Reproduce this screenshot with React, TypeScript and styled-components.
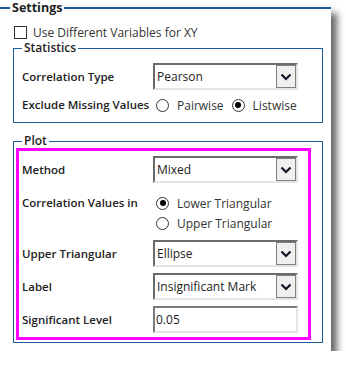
import React from 'react';
import styled, { createGlobalStyle } from 'styled-components';

const GlobalStyle = createGlobalStyle`
  body {
    margin: 0;
    background: #fff;
    font-family: 'Open Sans', 'Noto Sans', sans-serif;
    font-size: 12px;
    color: #1e1e1e;
  }
`;

const BLUE = '#1b5b98';

const SettingsPanel = styled.fieldset`
  box-sizing: border-box;
  width: 331px;
  height: 351px;
  margin: 0;
  padding: 0;
  border: none;
  border-top: 2px solid ${BLUE};
  background: #fff;
  box-shadow: 6px 6px 7px rgba(0, 0, 0, 0.6);
`;

const PanelTitle = styled.legend`
  margin-left: 10px;
  padding: 0 2px;
  font-size: 12.5px;
  font-weight: 700;
  line-height: 16px;
  color: #1e1e1e;
`;

const PanelBody = styled.div`
  padding: 7px 8px 0 13px;
`;

const CheckRow = styled.label`
  display: flex;
  align-items: center;
  height: 16px;
  margin: 1px 0 0 1px;
  color: #333;
`;

const CheckBox = styled.span`
  box-sizing: border-box;
  width: 13px;
  height: 13px;
  border: 1px solid #333;
  background: #fff;
  margin-right: 6px;
`;

const Group = styled.fieldset<{ $top?: number }>`
  margin: ${(p) => p.$top ?? 0}px 0 0;
  padding: 0;
  border: 1px solid ${BLUE};
  min-width: 0;
`;

const GroupTitle = styled.legend`
  margin-left: 8px;
  padding: 0 2px;
  font-size: 12px;
  font-weight: 600;
  line-height: 16px;
  color: #1e1e1e;
`;

const GroupBody = styled.div`
  padding: 0 0 7px 8px;
`;

const Highlight = styled.div`
  margin: -1px 11px 2px 2px;
  border: 3px solid #ff00ff;
  padding: 0 0 4px 3px;
`;

const FormRow = styled.div<{ $gap?: number; $top?: boolean }>`
  display: grid;
  grid-template-columns: 131px 145px;
  align-items: ${(p) => (p.$top ? 'start' : 'center')};
  margin-top: ${(p) => p.$gap ?? 0}px;
`;

const FieldLabel = styled.span`
  font-size: 11.5px;
  font-weight: 600;
  line-height: 20px;
  color: #222;
  white-space: nowrap;
`;

const SelectBox = styled.div`
  box-sizing: border-box;
  display: flex;
  align-items: stretch;
  width: 145px;
  height: 27px;
  border-top: 2px solid #6b6b6b;
  border-left: 2px solid #6b6b6b;
  border-right: 2px solid #e4e4e4;
  border-bottom: 2px solid #e4e4e4;
  background: #fff;
`;

const SelectValue = styled.span`
  flex: 1;
  padding-left: 2px;
  line-height: 23px;
  color: #222;
  white-space: nowrap;
  overflow: hidden;
`;

const DropButton = styled.span`
  box-sizing: border-box;
  width: 20px;
  display: flex;
  align-items: center;
  justify-content: center;
  border: 1px solid #808080;
  background: #efefef;
`;

const TextField = styled.div`
  box-sizing: border-box;
  width: 145px;
  height: 27px;
  padding-left: 1px;
  line-height: 23px;
  border-top: 2px solid #7a7a7a;
  border-left: 2px solid #7a7a7a;
  border-right: 2px solid #e4e4e4;
  border-bottom: 2px solid #e4e4e4;
  background: #fff;
  color: #222;
`;

const RadioList = styled.div<{ $inline?: boolean }>`
  display: flex;
  flex-direction: ${(p) => (p.$inline ? 'row' : 'column')};
  padding-left: 3px;
`;

const RadioOption = styled.label`
  display: flex;
  align-items: center;
  height: 20px;
  margin-right: 8px;
  color: #333;
  white-space: nowrap;
`;

const RadioDot = styled.span<{ $checked?: boolean }>`
  box-sizing: border-box;
  position: relative;
  width: 13px;
  height: 13px;
  margin-right: 8px;
  border: 1px solid #333;
  border-radius: 50%;
  background: #fff;
  &::after {
    content: '';
    display: ${(p) => (p.$checked ? 'block' : 'none')};
    position: absolute;
    left: 2.5px;
    top: 2.5px;
    width: 6px;
    height: 6px;
    border-radius: 50%;
    background: #000;
  }
`;

const Chevron = () => (
  <svg width="12" height="8" viewBox="0 0 12 8">
    <polyline points="1.5,1.5 6,6 10.5,1.5" fill="none" stroke="#101426" strokeWidth="2.2" />
  </svg>
);

const Select: React.FC<{ value: string }> = ({ value }) => (
  <SelectBox>
    <SelectValue>{value}</SelectValue>
    <DropButton>
      <Chevron />
    </DropButton>
  </SelectBox>
);

const Radio: React.FC<{ text: string; checked?: boolean }> = ({ text, checked }) => (
  <RadioOption>
    <RadioDot $checked={checked} />
    {text}
  </RadioOption>
);

const App: React.FC = () => {
  return (
    <>
      <GlobalStyle />
      <SettingsPanel>
        <PanelTitle>Settings</PanelTitle>
        <PanelBody>
          <CheckRow>
            <CheckBox />
            Use Different Variables for XY
          </CheckRow>

          <Group>
            <GroupTitle>Statistics</GroupTitle>
            <GroupBody>
              <FormRow $gap={7}>
                <FieldLabel>Correlation Type</FieldLabel>
                <Select value="Pearson" />
              </FormRow>
              <FormRow $gap={5}>
                <FieldLabel>Exclude Missing Values</FieldLabel>
                <RadioList $inline>
                  <Radio text="Pairwise" />
                  <Radio text="Listwise" checked />
                </RadioList>
              </FormRow>
            </GroupBody>
          </Group>

          <Group $top={10}>
            <GroupTitle>Plot</GroupTitle>
            <Highlight>
              <FormRow $gap={5}>
                <FieldLabel>Method</FieldLabel>
                <Select value="Mixed" />
              </FormRow>
              <FormRow $gap={10} $top>
                <FieldLabel>Correlation Values in</FieldLabel>
                <RadioList>
                  <Radio text="Lower Triangular" checked />
                  <Radio text="Upper Triangular" />
                </RadioList>
              </FormRow>
              <FormRow $gap={7}>
                <FieldLabel>Upper Triangular</FieldLabel>
                <Select value="Ellipse" />
              </FormRow>
              <FormRow $gap={6}>
                <FieldLabel>Label</FieldLabel>
                <Select value="Insignificant Mark" />
              </FormRow>
              <FormRow $gap={6}>
                <FieldLabel>Significant Level</FieldLabel>
                <TextField>0.05</TextField>
              </FormRow>
            </Highlight>
          </Group>
        </PanelBody>
      </SettingsPanel>
    </>
  );
};

export default App;
